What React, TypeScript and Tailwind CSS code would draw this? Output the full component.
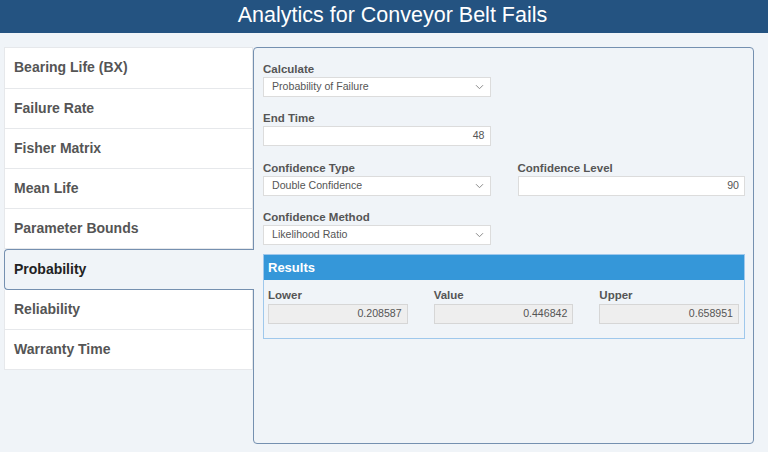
import React from "react";

const tabs = [
  "Bearing Life (BX)",
  "Failure Rate",
  "Fisher Matrix",
  "Mean Life",
  "Parameter Bounds",
  "Probability",
  "Reliability",
  "Warranty Time",
];

function Chevron() {
  return (
    <svg width="9" height="6" viewBox="0 0 9 6" className="shrink-0">
      <path d="M1 1.2l3.5 3.5L8 1.2" fill="none" stroke="#8a8a8a" strokeWidth="1" />
    </svg>
  );
}

function Select({ value }: { value: string }) {
  return (
    <div className="flex h-5 items-center justify-between border border-[#dcdcdc] bg-white pl-[8px] pr-[6px] text-[10.6px] text-[#555]">
      <span>{value}</span>
      <Chevron />
    </div>
  );
}

function Input({ value, disabled }: { value: string; disabled?: boolean }) {
  return (
    <div
      className={
        "flex h-5 items-center justify-end border pr-[5px] text-[10.6px] text-[#555] " +
        (disabled ? "border-[#d6d6d6] bg-[#eeeeee]" : "border-[#dcdcdc] bg-white")
      }
    >
      {value}
    </div>
  );
}

function Field({ label, children }: { label: string; children: React.ReactNode }) {
  return (
    <div className="flex flex-col">
      <label className="h-4 text-[11.5px] font-bold leading-4 text-[#555]">{label}</label>
      {children}
    </div>
  );
}

export default function App() {
  const active = "Probability";

  return (
    <div className="flex h-[452px] w-[768px] flex-col overflow-hidden bg-[#f0f4f8] font-['Liberation_Sans',Arial,sans-serif]">
      <header className="h-[33px] shrink-0 bg-[#245381] pl-[17px] text-center text-[21.5px] leading-[30px] text-white">
        Analytics for Conveyor Belt Fails
      </header>

      <div className="flex flex-1 pl-1 pr-[14px] pt-[14px]">
        <nav className="flex w-[249px] shrink-0 flex-col self-start">
          {tabs.map((t, i) =>
            t === active ? (
              <div
                key={t}
                className="relative z-10 -mr-px flex h-[41px] items-center rounded-l-[4px] border border-r-0 border-[#7590b0] bg-[#f0f4f8] pl-[9px] text-[14px] font-bold text-[#222]"
              >
                {t}
              </div>
            ) : (
              <div
                key={t}
                className={
                  "flex items-center border-x border-b border-[#e6e8eb] bg-white pl-[9px] text-[14px] font-bold text-[#555] " +
                  (i === 0 ? "h-[41.5px] border-t" : "h-10")
                }
              >
                {t}
              </div>
            )
          )}
        </nav>

        <section className="h-[397px] flex-1 rounded-[4px] border border-[#7590b0] bg-[#f0f4f8] pl-[9px] pr-[8px] pt-[12.5px]">
          <div className="grid grid-cols-2 gap-x-[27px] gap-y-[13.5px]">
            <Field label="Calculate">
              <Select value="Probability of Failure" />
            </Field>
            <div />
            <Field label="End Time">
              <Input value="48" />
            </Field>
            <div />
            <Field label="Confidence Type">
              <Select value="Double Confidence" />
            </Field>
            <Field label="Confidence Level">
              <Input value="90" />
            </Field>
            <Field label="Confidence Method">
              <Select value="Likelihood Ratio" />
            </Field>
          </div>

          <div className="mt-[9px] border border-[#9fc8ec]">
            <div className="flex h-[25px] items-center bg-[#3597d9] pl-[4px] text-[13px] font-bold text-white">
              Results
            </div>
            <div className="grid grid-cols-3 gap-x-[26px] pb-[14px] pl-[4px] pr-[5px] pt-[7px]">
              {[
                ["Lower", "0.208587"],
                ["Value", "0.446842"],
                ["Upper", "0.658951"],
              ].map(([l, v]) => (
                <div key={l} className="flex flex-col">
                  <span className="h-4 text-[11.5px] font-bold leading-4 text-[#555]">{l}</span>
                  <div className="mt-px">
                    <Input value={v} disabled />
                  </div>
                </div>
              ))}
            </div>
          </div>
        </section>
      </div>
    </div>
  );
}
